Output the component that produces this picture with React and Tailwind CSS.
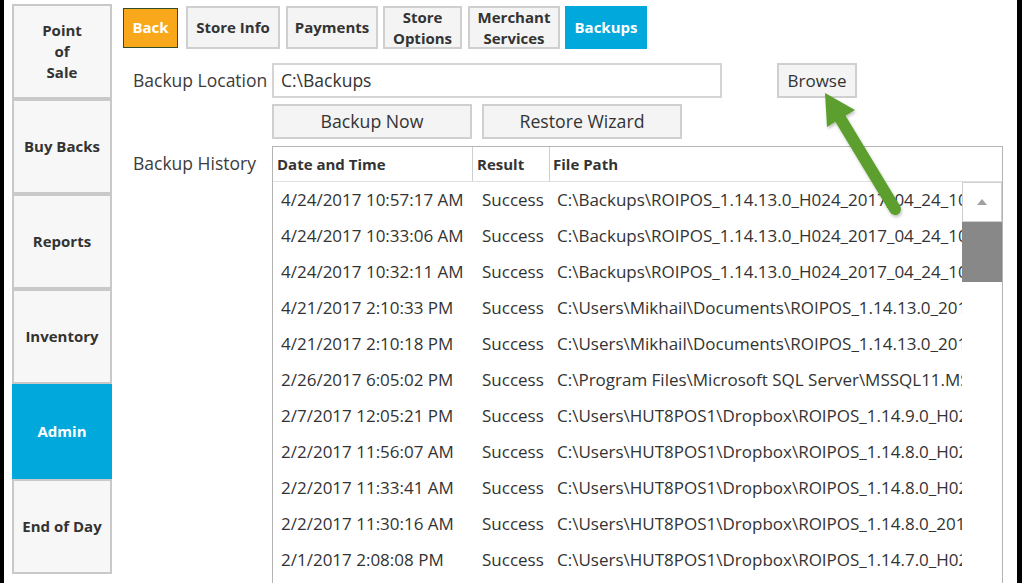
import React from "react";

const rows = [
  ["4/24/2017 10:57:17 AM", "Success", "C:\\Backups\\ROIPOS_1.14.13.0_H024_2017_04_24_10_57_17.bak"],
  ["4/24/2017 10:33:06 AM", "Success", "C:\\Backups\\ROIPOS_1.14.13.0_H024_2017_04_24_10_33_06.bak"],
  ["4/24/2017 10:32:11 AM", "Success", "C:\\Backups\\ROIPOS_1.14.13.0_H024_2017_04_24_10_32_11.bak"],
  ["4/21/2017 2:10:33 PM", "Success", "C:\\Users\\Mikhail\\Documents\\ROIPOS_1.14.13.0_2017_04_21.bak"],
  ["4/21/2017 2:10:18 PM", "Success", "C:\\Users\\Mikhail\\Documents\\ROIPOS_1.14.13.0_2017_04_21.bak"],
  ["2/26/2017 6:05:02 PM", "Success", "C:\\Program Files\\Microsoft SQL Server\\MSSQL11.MSSQLSERVER"],
  ["2/7/2017 12:05:21 PM", "Success", "C:\\Users\\HUT8POS1\\Dropbox\\ROIPOS_1.14.9.0_H024.bak"],
  ["2/2/2017 11:56:07 AM", "Success", "C:\\Users\\HUT8POS1\\Dropbox\\ROIPOS_1.14.8.0_H024.bak"],
  ["2/2/2017 11:33:41 AM", "Success", "C:\\Users\\HUT8POS1\\Dropbox\\ROIPOS_1.14.8.0_H024.bak"],
  ["2/2/2017 11:30:16 AM", "Success", "C:\\Users\\HUT8POS1\\Dropbox\\ROIPOS_1.14.8.0_2017.bak"],
  ["2/1/2017 2:08:08 PM", "Success", "C:\\Users\\HUT8POS1\\Dropbox\\ROIPOS_1.14.7.0_H024.bak"],
];

function SideBtn({ children, active }) {
  return (
    <div
      className={
        "h-[95px] flex items-center justify-center text-center text-[15px] font-bold leading-[21px] border-2 " +
        (active
          ? "bg-[#00a8dc] border-[#00a8dc] text-white"
          : "bg-[#f7f7f7] border-[#c9c9c9] text-[#333]")
      }
    >
      {children}
    </div>
  );
}

function Tab({ children, w }) {
  return (
    <div
      className={
        "h-[43px] flex items-center justify-center text-center text-[15px] font-bold leading-[21px] border-2 border-[#cfcfcf] bg-[#f4f4f4] text-[#333] " +
        w
      }
    >
      {children}
    </div>
  );
}

export default function App() {
  return (
    <div className="relative w-[1022px] h-[583px] overflow-hidden bg-white flex font-['Open_Sans',sans-serif] text-[#333]">
      <div className="w-[4px] bg-black shrink-0" />
      <div className="ml-[8px] w-[100px] shrink-0 pt-[4px] flex flex-col">
        <SideBtn>
          Point
          <br />
          of
          <br />
          Sale
        </SideBtn>
        <SideBtn>Buy Backs</SideBtn>
        <SideBtn>Reports</SideBtn>
        <SideBtn>Inventory</SideBtn>
        <SideBtn active>Admin</SideBtn>
        <SideBtn>End of Day</SideBtn>
      </div>

      <div className="ml-[11px] flex-1 flex flex-col min-w-0">
        {/* Tabs */}
        <div className="mt-[6px] flex items-center">
          <div className="h-[40px] w-[55px] flex items-center justify-center bg-[#f9a81b] border border-[#2e4d2a] text-white text-[15px] font-bold">
            Back
          </div>
          <Tab w="ml-[8px] w-[94px]">Store Info</Tab>
          <Tab w="ml-[6px] w-[92px]">Payments</Tab>
          <Tab w="ml-[5px] w-[79px]">
            Store
            <br />
            Options
          </Tab>
          <Tab w="ml-[6px] w-[92px]">
            Merchant
            <br />
            Services
          </Tab>
          <div className="ml-[5px] h-[43px] w-[82px] flex items-center justify-center bg-[#00a8dc] text-white text-[15px] font-bold">
            Backups
          </div>
        </div>

        {/* Backup Location */}
        <div className="mt-[14px] flex items-center">
          <div className="w-[149px] pl-[10px] text-[17.5px] text-[#3c3c3c] whitespace-nowrap">Backup Location</div>
          <div className="w-[450px] h-[35px] border-2 border-[#d4d4d4] bg-white flex items-center pl-[7px] text-[17.5px] text-[#333]">
            C:\Backups
          </div>
          <div className="ml-[55px] w-[80px] h-[35px] border-2 border-[#cfcfcf] bg-[#f4f4f4] flex items-center justify-center text-[17px] text-[#333]">
            Browse
          </div>
        </div>

        {/* Buttons */}
        <div className="mt-[6px] flex ml-[149px] gap-[10px]">
          <div className="w-[200px] h-[35px] border-2 border-[#cfcfcf] bg-[#f4f4f4] flex items-center justify-center text-[17.7px] text-[#333]">
            Backup Now
          </div>
          <div className="w-[200px] h-[35px] border-2 border-[#cfcfcf] bg-[#f4f4f4] flex items-center justify-center text-[17.7px] text-[#333]">
            Restore Wizard
          </div>
        </div>

        {/* History */}
        <div className="mt-[7px] flex flex-1 min-h-0">
          <div className="w-[149px] pl-[10px] pt-[4px] text-[17.5px] text-[#3c3c3c] whitespace-nowrap">Backup History</div>
          <div className="w-[731px] border border-b-0 border-[#b4b4b4] flex flex-col min-h-0">
            <div className="h-[35px] flex border-b border-[#e0e0e0] text-[15px] font-bold text-[#333] shrink-0">
              <div className="w-[200px] pl-[4px] flex items-center border-r border-[#cfcfcf]">Date and Time</div>
              <div className="w-[77px] pl-[4px] flex items-center border-r border-[#cfcfcf]">Result</div>
              <div className="pl-[3px] flex items-center">File Path</div>
            </div>
            <div className="flex flex-1 min-h-0">
              <div className="w-[689px] overflow-hidden text-[17px] text-[#333]">
                {rows.map((r, i) => (
                  <div key={i} className="h-[36px] flex items-center whitespace-nowrap">
                    <div className="w-[200px] pl-[8px] shrink-0">{r[0]}</div>
                    <div className="w-[77px] pl-[9px] shrink-0">{r[1]}</div>
                    <div className="pl-[7px] shrink-0">{r[2]}</div>
                  </div>
                ))}
              </div>
              <div className="w-[40px] flex flex-col shrink-0">
                <div className="h-[40px] border border-[#cfcfcf] bg-white flex items-center justify-center">
                  <svg width="10" height="6" viewBox="0 0 10 6">
                    <polygon points="5,0 10,6 0,6" fill="#a0a0a0" />
                  </svg>
                </div>
                <div className="h-[60px] bg-[#888888]" />
              </div>
            </div>
          </div>
        </div>
      </div>
      <div className="w-[5px] bg-black shrink-0" />

      {/* Green arrow annotation */}
      <svg className="absolute left-0 top-0 pointer-events-none" width="1022" height="583">
        <defs>
          <filter id="sh" x="-20%" y="-20%" width="140%" height="140%">
            <feDropShadow dx="1" dy="2" stdDeviation="1.5" floodColor="#000" floodOpacity="0.25" />
          </filter>
        </defs>
        <g filter="url(#sh)">
          <line x1="895" y1="209" x2="840" y2="118" stroke="#5b9f2d" strokeWidth="12" strokeLinecap="round" />
          <polygon points="825,93 855,110 827,127" fill="#5b9f2d" />
        </g>
      </svg>
    </div>
  );
}
